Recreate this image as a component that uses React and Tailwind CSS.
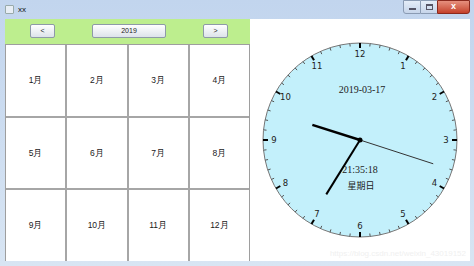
import React from 'react';

const months = ['1月', '2月', '3月', '4月', '5月', '6月', '7月', '8月', '9月', '10月', '11月', '12月'];

const CX = 110;
const CY = 121;
const R = 97;

function Clock() {
    const ticks = Array.from({ length: 60 }, (_, i) => {
        const a = (i * 6 * Math.PI) / 180;
        const major = i % 5 === 0;
        const len = major ? 5 : 3;
        const s = Math.sin(a);
        const c = -Math.cos(a);
        return (
            <line
                key={i}
                x1={CX + s * R}
                y1={CY + c * R}
                x2={CX + s * (R - len)}
                y2={CY + c * (R - len)}
                stroke={major ? '#000' : '#555'}
                strokeWidth={major ? 2 : 1}
            />
        );
    });

    const numbers = Array.from({ length: 12 }, (_, i) => {
        const n = i + 1;
        const a = (n * 30 * Math.PI) / 180;
        return (
            <text
                key={n}
                x={CX + Math.sin(a) * 86}
                y={CY - Math.cos(a) * 86 + 3}
                textAnchor="middle"
                fontSize="8.5"
                fill="#222"
                fontFamily="'DejaVu Sans', sans-serif"
            >
                {n}
            </text>
        );
    });

    const hand = (deg, len) => {
        const a = (deg * Math.PI) / 180;
        return { x2: CX + Math.sin(a) * len, y2: CY - Math.cos(a) * len };
    };
    const hour = hand(287.6, 50);
    const minute = hand(211.8, 64);
    const second = hand(108, 77);

    return (
        <svg width="220" height="242" viewBox="0 0 220 242">
            <circle cx={CX} cy={CY} r={R} fill="#c3f0fb" stroke="#777" strokeWidth="1" />
            {ticks}
            {numbers}
            <text x={CX + 2} y="74" textAnchor="middle" fontSize="10" fill="#222" fontFamily="'Liberation Serif', 'Noto Sans CJK SC', serif">2019-03-17</text>
            <text x={CX} y="154" textAnchor="middle" fontSize="10" fill="#222" fontFamily="'Liberation Serif', 'Noto Sans CJK SC', serif">21:35:18</text>
            <text x={CX + 1} y="170" textAnchor="middle" fontSize="9" fill="#222" fontFamily="'Noto Sans CJK SC', sans-serif">星期日</text>
            <line x1={CX} y1={CY} {...second} stroke="#333" strokeWidth="1" />
            <line x1={CX} y1={CY} {...minute} stroke="#000" strokeWidth="2" />
            <line x1={CX} y1={CY} {...hour} stroke="#000" strokeWidth="2.5" />
            <circle cx={CX} cy={CY} r="2.5" fill="#000" />
        </svg>
    );
}

function NavButton({ label, className }) {
    return (
        <div className={`flex h-[14px] items-center justify-center rounded-[2px] border border-[#8e9aa8] bg-gradient-to-b from-[#ffffff] to-[#dde3ea] text-[7px] text-[#222] ${className}`}>
            {label}
        </div>
    );
}

export default function App() {
    return (
        <div className="flex h-[266px] w-[474px] flex-col bg-gradient-to-b from-[#c2d5ee] to-[#d8e5f3] font-['Liberation_Sans',sans-serif]">
            <div className="relative flex h-[19px] shrink-0 items-center gap-[4px] pl-[5px]">
                <div className="h-[9px] w-[9px] rounded-[1px] border border-[#9aa] bg-[#e8eef5]" />
                <span className="text-[8px] text-[#111]">xx</span>
                <div className="absolute right-[4px] top-0 flex h-[14px]">
                    <div className="flex w-[18px] items-end justify-center rounded-bl-[3px] border border-[#8a9bb3] bg-gradient-to-b from-[#e4edf8] to-[#c6d5ea] pb-[3px]">
                        <div className="h-[2px] w-[7px] bg-[#556]" />
                    </div>
                    <div className="flex w-[16px] items-center justify-center border-y border-[#8a9bb3] bg-gradient-to-b from-[#e4edf8] to-[#c6d5ea]">
                        <div className="h-[6px] w-[7px] border border-[#556] border-t-2" />
                    </div>
                    <div className="flex w-[33px] items-center justify-center rounded-br-[3px] border border-[#8b2a1e] bg-gradient-to-b from-[#e6907e] to-[#c4402a] text-[9px] font-bold text-white">
                        x
                    </div>
                </div>
            </div>
            <div className="mx-[5px] flex h-[242px] w-[465px] bg-white">
                <div className="flex w-[245px] flex-col">
                    <div className="relative h-[25px] shrink-0 bg-[#bdee8e]">
                        <NavButton label="<" className="absolute left-[25px] top-[5px] w-[25px]" />
                        <NavButton label="2019" className="absolute left-[87px] top-[5px] w-[74px]" />
                        <NavButton label=">" className="absolute left-[198px] top-[5px] w-[25px]" />
                    </div>
                    <div className="grid flex-1 grid-cols-4 grid-rows-3 gap-[2px] border-x border-t border-[#9e9e9e] bg-[#a6a6a6]">
                        {months.map((m) => (
                            <div key={m} className="flex items-center justify-center bg-white text-[8.5px] text-[#1a1a1a]">
                                {m}
                            </div>
                        ))}
                    </div>
                </div>
                <div className="relative flex-1">
                    <div className="absolute left-0 top-0">
                        <Clock />
                    </div>
                    <div className="absolute bottom-[1px] right-[4px] text-[8px] text-[#f0f0f0]">https://blog.csdn.net/weixin_43019152</div>
                </div>
            </div>
        </div>
    );
}
